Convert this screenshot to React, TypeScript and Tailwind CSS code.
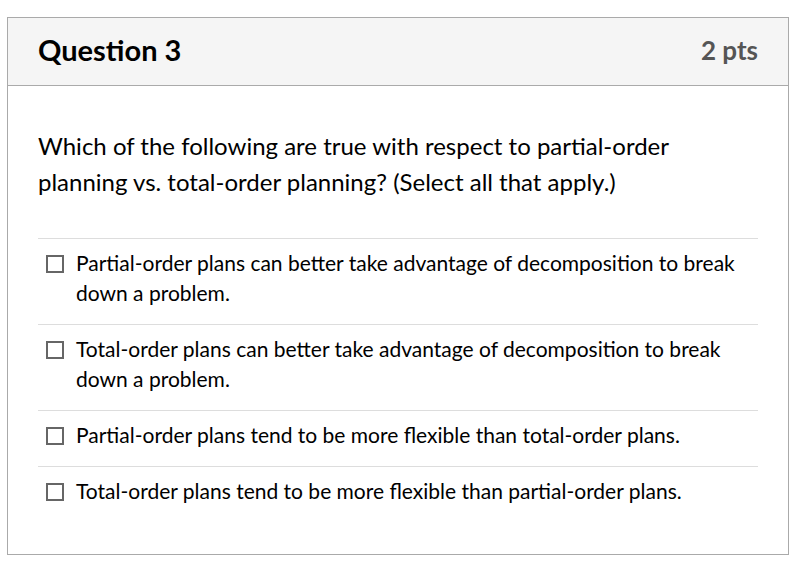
export default function App() {
  const options = [
    "Partial-order plans can better take advantage of decomposition to break down a problem.",
    "Total-order plans can better take advantage of decomposition to break down a problem.",
    "Partial-order plans tend to be more flexible than total-order plans.",
    "Total-order plans tend to be more flexible than partial-order plans.",
  ];

  return (
    <div className="min-h-[570px] w-[800px] bg-white pt-[17px] pl-[7px] font-['Lato',sans-serif] text-black">
      <div className="w-[782px] border border-[#aaaaaa]">
        <div className="flex h-[68px] items-center justify-between border-b border-[#aaaaaa] bg-[#f5f5f5] px-[30px] pb-[3px]">
          <h2 className="text-[29px] font-bold">Question 3</h2>
          <span className="text-[26px] font-bold text-[#555555]">2 pts</span>
        </div>
        <div className="px-[30px] pt-[42px] pb-[32px]">
          <p className="text-[24px] leading-[36px]">
            Which of the following are true with respect to partial-order
            <br />
            planning vs. total-order planning? (Select all that apply.)
          </p>
          <div className="mt-[38px]">
            {options.map((opt) => (
              <label
                key={opt}
                className="flex items-start border-t border-[#dddddd] pt-[9px] pb-[16px] pl-[8px] pr-[10px]"
              >
                <span className="mt-[7px] mr-[12px] h-[18px] w-[18px] shrink-0 border-2 border-[#666666] bg-white" />
                <span className="text-[21px] leading-[30px]">{opt}</span>
              </label>
            ))}
          </div>
        </div>
      </div>
    </div>
  );
}
